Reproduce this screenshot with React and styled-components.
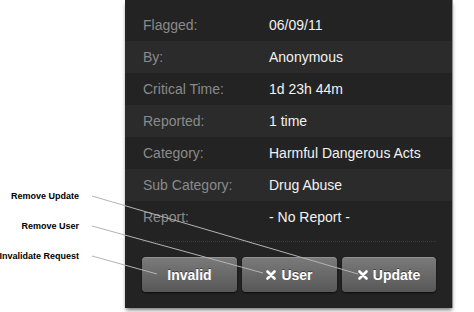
import React from "react";
import styled, { createGlobalStyle } from "styled-components";

const Global = createGlobalStyle`
  html, body { margin: 0; padding: 0; background: #fff; }
  body { font-family: "Liberation Sans", Arial, sans-serif; }
`;

const Page = styled.div`
  position: relative;
  width: 474px;
  height: 312px;
  display: flex;
  align-items: flex-start;
  overflow: hidden;
`;

const Callouts = styled.div`
  width: 125px;
  flex: none;
  padding-top: 181px;
  padding-right: 46px;
  box-sizing: border-box;
  display: flex;
  flex-direction: column;
  align-items: flex-end;
`;

const Callout = styled.div`
  height: 30px;
  line-height: 30px;
  font-size: 9px;
  font-weight: bold;
  color: #000;
  white-space: nowrap;
`;

const Panel = styled.div`
  width: 328px;
  flex: none;
  box-sizing: border-box;
  background: #232323;
  border-right: 1px solid #8e8e8e;
  padding: 9px 0 16px;
  box-shadow: 0 3px 4px -1px rgba(0, 0, 0, 0.55);
`;

const Row = styled.div`
  height: 32px;
  display: flex;
  align-items: center;
  padding-left: 18px;
  background: ${(p) => (p.$alt ? "#2b2b2b" : "#232323")};
  font-size: 14px;
`;

const Label = styled.span`
  width: 126px;
  flex: none;
  color: #8a8a8a;
`;

const Value = styled.span`
  color: #f2f2f2;
`;

const Separator = styled.div`
  margin: 8px 16px 0 17px;
  border-top: 1px dotted #3d3d3d;
`;

const Buttons = styled.div`
  display: grid;
  grid-template-columns: 95px 95px 94px;
  gap: 5px;
  padding: 15px 17px 0;
`;

const Button = styled.button`
  height: 35px;
  border: none;
  border-radius: 4px;
  background: linear-gradient(#7b7b7b, #575757);
  box-shadow: inset 0 1px 0 rgba(255, 255, 255, 0.18), 0 1px 2px rgba(0, 0, 0, 0.7);
  color: #fff;
  font-family: "Liberation Sans", Arial, sans-serif;
  font-size: 14px;
  font-weight: bold;
  text-shadow: 0 -1px 0 rgba(0, 0, 0, 0.45);
  display: flex;
  align-items: center;
  justify-content: center;
  gap: 5px;
  padding: 0;
`;

const Leaders = styled.svg`
  position: absolute;
  left: 0;
  top: 0;
  pointer-events: none;
`;

const XIcon = () => (
  <svg width="10" height="10" viewBox="0 0 10 10">
    <path d="M1.5 1.5 L8.5 8.5 M8.5 1.5 L1.5 8.5" stroke="#fff" strokeWidth="2.6" strokeLinecap="round" />
  </svg>
);

const rows = [
  ["Flagged:", "06/09/11"],
  ["By:", "Anonymous"],
  ["Critical Time:", "1d 23h 44m"],
  ["Reported:", "1 time"],
  ["Category:", "Harmful Dangerous Acts"],
  ["Sub Category:", "Drug Abuse"],
  ["Report:", "- No Report -"],
];

export default function App() {
  return (
    <>
      <Global />
      <Page>
        <Callouts>
          <Callout>Remove Update</Callout>
          <Callout>Remove User</Callout>
          <Callout>Invalidate Request</Callout>
        </Callouts>
        <Panel>
          {rows.map(([l, v], i) => (
            <Row key={l} $alt={i % 2 === 1}>
              <Label>{l}</Label>
              <Value>{v}</Value>
            </Row>
          ))}
          <Separator />
          <Buttons>
            <Button>Invalid</Button>
            <Button>
              <XIcon />
              User
            </Button>
            <Button>
              <XIcon />
              Update
            </Button>
          </Buttons>
        </Panel>
        <Leaders width="474" height="312">
          <g stroke="#b4b4b4" strokeWidth="1" fill="none">
            <line x1="92" y1="196" x2="358" y2="274" />
            <line x1="92" y1="226" x2="263" y2="273" />
            <line x1="92" y1="256" x2="157" y2="274" />
          </g>
        </Leaders>
      </Page>
    </>
  );
}
